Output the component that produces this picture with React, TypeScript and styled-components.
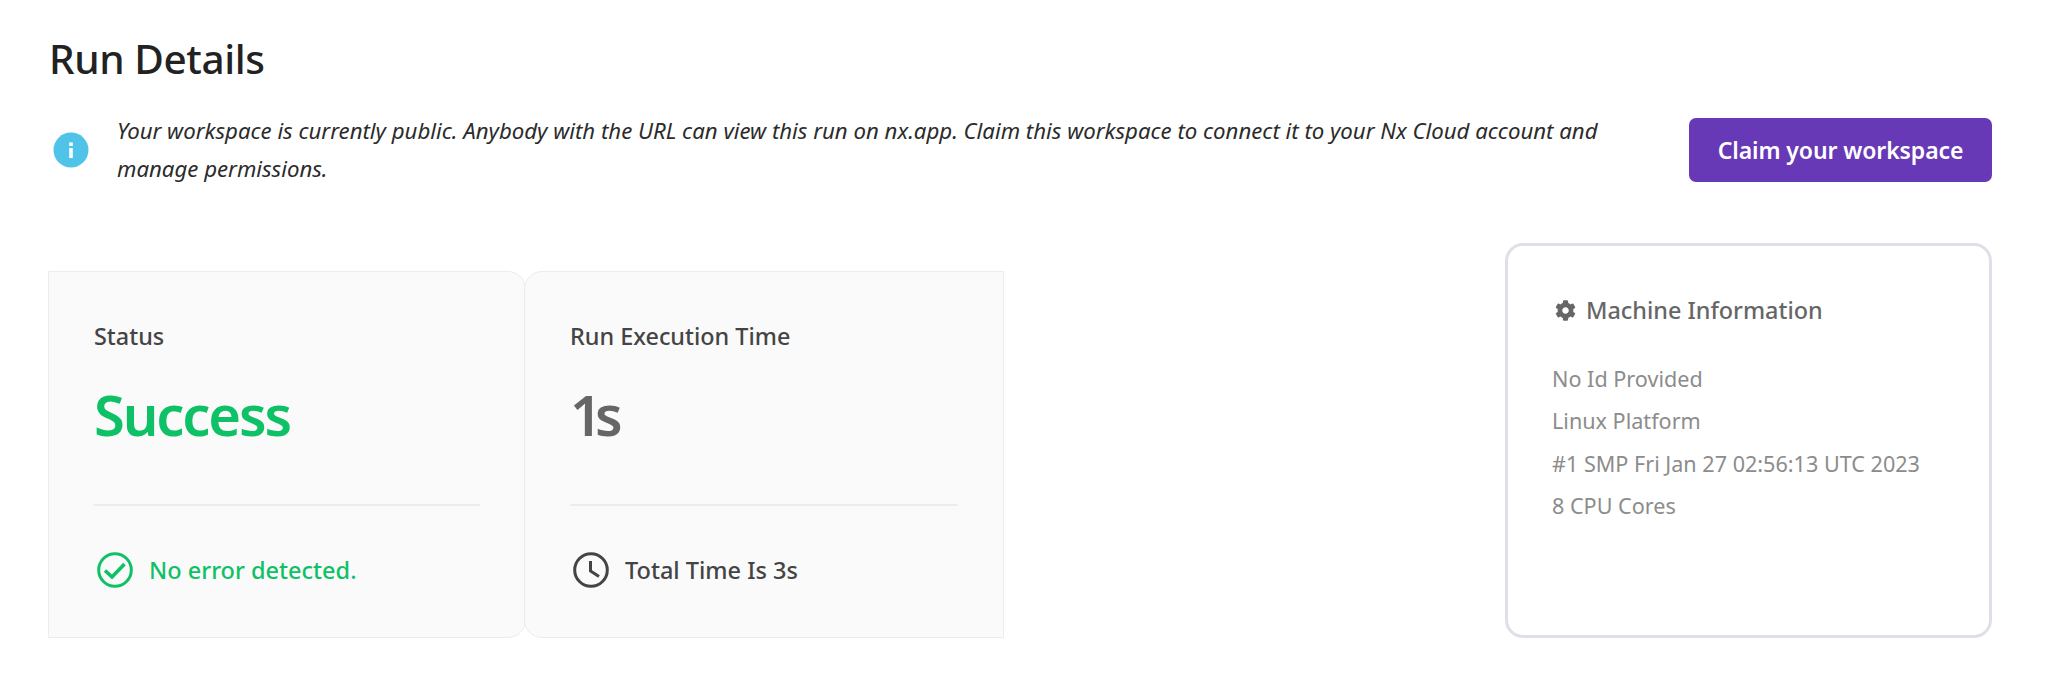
import React from "react";
import styled, { createGlobalStyle } from "styled-components";
import { FaCog } from "react-icons/fa";

const Global = createGlobalStyle`
  html, body { margin: 0; padding: 0; background: #fff; }
  body { font-family: "Noto Sans", "Open Sans", sans-serif; }
`;

const Page = styled.main`
  width: 2048px;
  box-sizing: border-box;
  padding: 32px 56px 0 48px;
`;

const Title = styled.h1`
  margin: 0;
  padding-left: 1px;
  font-size: 40.5px;
  line-height: 54px;
  font-weight: 550;
  letter-spacing: -0.4px;
  color: #222;
`;

const Notice = styled.section`
  display: flex;
  align-items: center;
  justify-content: space-between;
  margin-top: 26px;
`;

const NoticeBody = styled.div`
  display: flex;
  align-items: center;
  gap: 28px;
  padding-left: 5px;
`;

const NoticeText = styled.p`
  margin: 0;
  width: 1490px;
  font-size: 22.2px;
  line-height: 38px;
  font-style: italic;
  color: #2b2b2b;
`;

const ClaimButton = styled.button`
  width: 303px;
  height: 64px;
  border: 0;
  border-radius: 7px;
  background: #6739b6;
  color: #fff;
  font-family: inherit;
  font-size: 23px;
  font-weight: 600;
  letter-spacing: -0.1px;
`;

const Row = styled.section`
  display: flex;
  justify-content: space-between;
  align-items: flex-start;
  margin-top: 55px;
`;

const Stats = styled.div`
  display: flex;
  margin-top: 28px;
`;

const StatCard = styled.article<{ $side: "left" | "right" }>`
  box-sizing: border-box;
  width: ${(p) => (p.$side === "left" ? "478px" : "480px")};
  margin-left: ${(p) => (p.$side === "left" ? "0" : "-2px")};
  height: 367px;
  padding: 48px 45px 0;
  background: #fafafa;
  border: 1.5px solid #ececec;
  border-radius: ${(p) => (p.$side === "left" ? "0 18px 18px 0" : "18px 0 0 18px")};
`;

const StatLabel = styled.h2`
  margin: 0;
  font-size: 23.4px;
  line-height: 32px;
  font-weight: 500;
  color: #444;
`;

const StatValue = styled.div<{ $color: string; $tracking: number }>`
  margin-top: 22px;
  font-size: 56px;
  line-height: 80px;
  font-weight: 600;
  letter-spacing: ${(p) => p.$tracking}px;
  color: ${(p) => p.$color};
`;

const Divider = styled.hr`
  margin: 50px 0 0;
  border: 0;
  border-top: 2px solid #ececec;
`;

const StatFoot = styled.div<{ $color: string }>`
  display: flex;
  align-items: center;
  gap: 16px;
  margin-top: 46px;
  padding-left: 3px;
  font-size: 23.5px;
  line-height: 36px;
  font-weight: 500;
  color: ${(p) => p.$color};
`;

const MachineCard = styled.aside`
  box-sizing: border-box;
  width: 487px;
  height: 395px;
  padding: 46px 44px 0;
  border: 3px solid #dde1e7;
  border-radius: 18px;
`;

const MachineTitle = styled.h2`
  display: flex;
  align-items: center;
  gap: 10px;
  margin: 0 0 30px;
  padding-left: 3px;
  font-size: 23.4px;
  line-height: 36px;
  font-weight: 500;
  color: #666;
`;

const MachineLine = styled.p`
  margin: 0;
  font-size: 21.6px;
  line-height: 42.3px;
  color: #8c8c8c;
`;

const InfoIcon = () => (
  <svg width="36" height="36" viewBox="0 0 36 36" aria-hidden="true">
    <circle cx="18" cy="18" r="17.5" fill="#4fc3e8" />
    <rect x="16.2" y="16" width="3.6" height="10" fill="#fff" />
    <rect x="16.2" y="10.4" width="3.6" height="3.6" fill="#fff" />
  </svg>
);

const CheckIcon = () => (
  <svg width="36" height="36" viewBox="0 0 36 36" fill="none" stroke="#0fc166" strokeWidth="3" aria-hidden="true">
    <circle cx="18" cy="18" r="16.3" />
    <path d="M8 18.5 L15 25 L27.5 12" strokeWidth="3.6" />
  </svg>
);

const ClockIcon = () => (
  <svg width="36" height="36" viewBox="0 0 36 36" fill="none" stroke="#444" strokeWidth="3" aria-hidden="true">
    <circle cx="18" cy="18" r="16.3" />
    <path d="M17.5 9 V19 L26 24.5" />
  </svg>
);

export default function App() {
  return (
    <Page>
      <Global />
      <Title>Run Details</Title>
      <Notice>
        <NoticeBody>
          <InfoIcon />
          <NoticeText>
            Your workspace is currently public. Anybody with the URL can view this run on nx.app. Claim this workspace
            to connect it to your Nx Cloud account and manage permissions.
          </NoticeText>
        </NoticeBody>
        <ClaimButton>Claim your workspace</ClaimButton>
      </Notice>
      <Row>
        <Stats>
          <StatCard $side="left">
            <StatLabel>Status</StatLabel>
            <StatValue $color="#0fc166" $tracking={-2.1}>
              Success
            </StatValue>
            <Divider />
            <StatFoot $color="#0fc166">
              <CheckIcon />
              No error detected.
            </StatFoot>
          </StatCard>
          <StatCard $side="right">
            <StatLabel>Run Execution Time</StatLabel>
            <StatValue $color="#666" $tracking={-7}>
              1s
            </StatValue>
            <Divider />
            <StatFoot $color="#444">
              <ClockIcon />
              Total Time Is 3s
            </StatFoot>
          </StatCard>
        </Stats>
        <MachineCard>
          <MachineTitle>
            <FaCog size={21} color="#666" />
            Machine Information
          </MachineTitle>
          <MachineLine>No Id Provided</MachineLine>
          <MachineLine>Linux Platform</MachineLine>
          <MachineLine>#1 SMP Fri Jan 27 02:56:13 UTC 2023</MachineLine>
          <MachineLine>8 CPU Cores</MachineLine>
        </MachineCard>
      </Row>
    </Page>
  );
}
